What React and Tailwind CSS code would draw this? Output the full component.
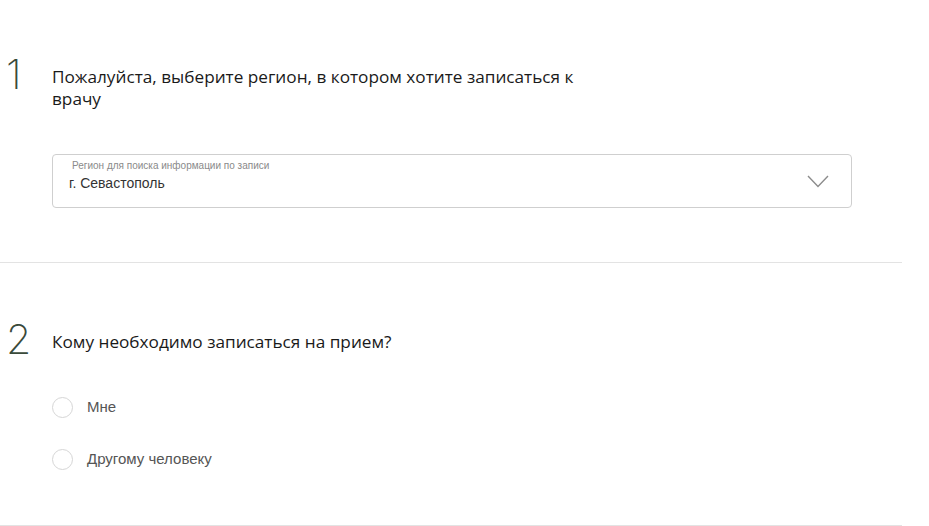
import React, { useState } from "react";

function StepNumber({ children }) {
  return (
    <div className="w-[52px] shrink-0 pl-[6px] text-[41px] font-extralight leading-none text-[#3a4a3a] font-['Inter',sans-serif] -mt-[12px]">
      {children}
    </div>
  );
}

function Radio({ label, checked, onClick }) {
  return (
    <button
      onClick={onClick}
      className="flex items-center h-[22px] text-left"
    >
      <span className="w-[21px] h-[21px] rounded-full border border-[#d6d6d6] bg-white flex items-center justify-center">
        {checked && <span className="w-[11px] h-[11px] rounded-full bg-[#21a038]" />}
      </span>
      <span className="ml-[14px] text-[15px] text-[#555] font-['Liberation_Sans',Arial,sans-serif]">
        {label}
      </span>
    </button>
  );
}

export default function App() {
  const [who, setWho] = useState(null);

  return (
    <div className="w-[902px] bg-white font-['Open_Sans',sans-serif]">
      {/* шаг 1 */}
      <div className="pt-[66px] pb-[54px] border-b border-[#e3e3e3] flex">
        <StepNumber>1</StepNumber>
        <div className="flex-1">
          <h2 className="max-w-[565px] text-[17.2px] leading-[22px] text-[#1a1a1a]">
            Пожалуйста, выберите регион, в котором хотите записаться к врачу
          </h2>
          <div className="mt-[44px] w-[800px] h-[54px] border border-[#cfcfcf] rounded-[4px] flex items-center justify-between pl-[16px] pr-[22px] font-['Liberation_Sans',Arial,sans-serif]">
            <div className="flex flex-col -mt-[11px]">
              <span className="pl-[3px] text-[10px] leading-[12px] text-[#8a8a8a]">
                Регион для поиска информации по записи
              </span>
              <span className="mt-[3px] text-[14px] leading-[16px] text-[#333]">
                г. Севастополь
              </span>
            </div>
            <svg width="22" height="13" viewBox="0 0 22 13" fill="none">
              <polyline
                points="1,1 11,11.5 21,1"
                stroke="#8c8c8c"
                strokeWidth="1.4"
              />
            </svg>
          </div>
        </div>
      </div>

      {/* шаг 2 */}
      <div className="pt-[68px] pb-[55px] border-b border-[#e3e3e3] flex">
        <StepNumber>2</StepNumber>
        <div className="flex-1">
          <h2 className="text-[17.2px] leading-[22px] text-[#1a1a1a]">
            Кому необходимо записаться на прием?
          </h2>
          <div className="mt-[43px] flex flex-col gap-[30px]">
            <Radio label="Мне" checked={who === "me"} onClick={() => setWho("me")} />
            <Radio
              label="Другому человеку"
              checked={who === "other"}
              onClick={() => setWho("other")}
            />
          </div>
        </div>
      </div>
    </div>
  );
}
